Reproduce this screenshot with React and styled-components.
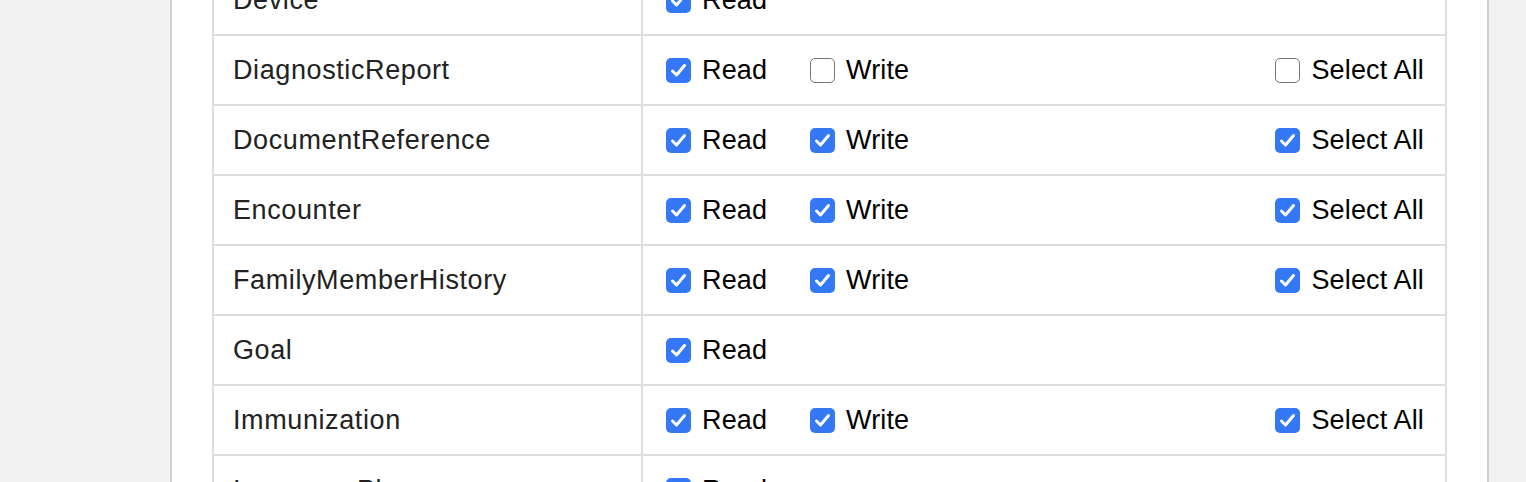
import styled, { createGlobalStyle } from "styled-components";

const GlobalStyle = createGlobalStyle`
    body {
        margin: 0;
        background: #f2f2f2;
        font-family: "Liberation Sans", Arial, Helvetica, sans-serif;
        overflow: hidden;
    }
`;

const Panel = styled.div`
    margin-left: 170px;
    width: 1235px;
    min-height: 100vh;
    padding: 0 40px;
    background: #fff;
    border-left: 2px solid #cfcfcf;
    border-right: 2px solid #cfcfcf;
`;

const Table = styled.div`
    margin-top: -34px;
    border-left: 2px solid #dedede;
    border-right: 2px solid #dedede;
`;

const Row = styled.div`
    display: grid;
    grid-template-columns: 429px 1fr;
    height: 68px;
    border-bottom: 2px solid #dedede;
`;

const Name = styled.div`
    display: flex;
    align-items: center;
    padding-left: 19px;
    border-right: 2px solid #dedede;
    font-size: 27px;
    letter-spacing: 0.6px;
    color: #222;
`;

const Options = styled.div`
    display: flex;
    align-items: center;
    padding: 0 21px 0 23px;
`;

const Option = styled.label`
    display: flex;
    align-items: center;
    gap: 11px;
    width: ${(p) => (p.$right ? "auto" : "144px")};
    margin-left: ${(p) => (p.$right ? "auto" : "0")};
    font-size: 27px;
    letter-spacing: 0.15px;
    color: #000;
`;

const Box = styled.span`
    display: inline-flex;
    align-items: center;
    justify-content: center;
    box-sizing: border-box;
    flex: none;
    width: 25px;
    height: 25px;
    border-radius: 5px;
    background: ${(p) => (p.$on ? "#3478f6" : "#fff")};
    border: ${(p) => (p.$on ? "none" : "1.5px solid #767676")};
`;

function Check({ on, label, right }) {
    return (
        <Option $right={right}>
            <Box $on={on}>
                {on && (
                    <svg width="17" height="17" viewBox="0 0 17 17">
                        <polyline points="2.5,9 6.5,13 14.5,3.5" fill="none" stroke="#fff" strokeWidth="3" strokeLinecap="round" strokeLinejoin="round" />
                    </svg>
                )}
            </Box>
            {label}
        </Option>
    );
}

const rows = [
    { name: "Device", read: true },
    { name: "DiagnosticReport", read: true, write: false, all: false },
    { name: "DocumentReference", read: true, write: true, all: true },
    { name: "Encounter", read: true, write: true, all: true },
    { name: "FamilyMemberHistory", read: true, write: true, all: true },
    { name: "Goal", read: true },
    { name: "Immunization", read: true, write: true, all: true },
    { name: "InsurancePlan", read: true },
];

export default function App() {
    return (
        <>
            <GlobalStyle />
            <Panel>
                <Table>
                    {rows.map((r) => (
                        <Row key={r.name}>
                            <Name>{r.name}</Name>
                            <Options>
                                <Check on={r.read} label="Read" />
                                {r.write !== undefined && <Check on={r.write} label="Write" />}
                                {r.all !== undefined && <Check on={r.all} label="Select All" right />}
                            </Options>
                        </Row>
                    ))}
                </Table>
            </Panel>
        </>
    );
}
